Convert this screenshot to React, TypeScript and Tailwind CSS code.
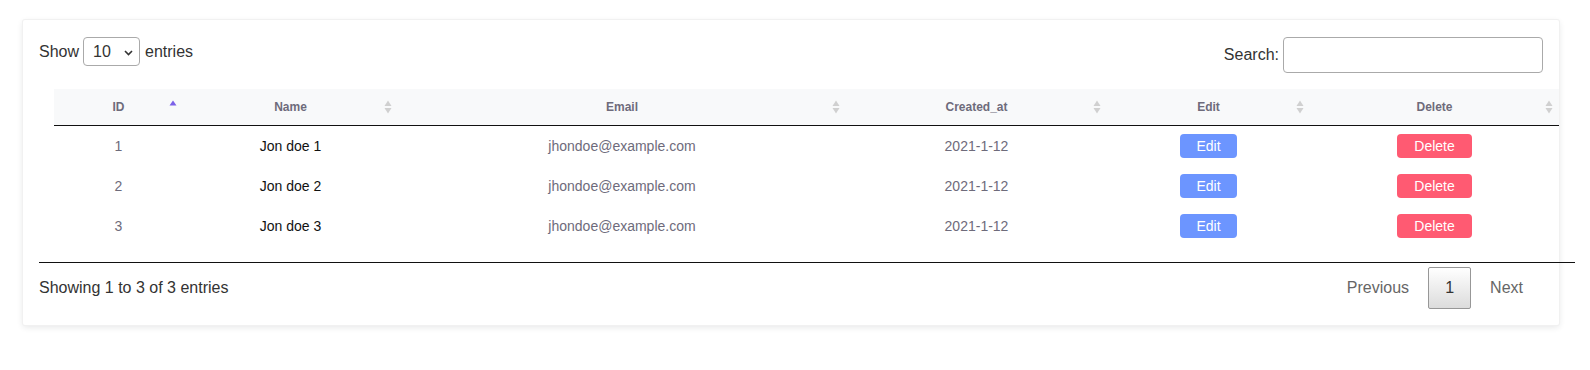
import React from "react";

const users = [
  { id: 1, name: "Jon doe 1", email: "jhondoe@example.com", created: "2021-1-12" },
  { id: 2, name: "Jon doe 2", email: "jhondoe@example.com", created: "2021-1-12" },
  { id: 3, name: "Jon doe 3", email: "jhondoe@example.com", created: "2021-1-12" },
];

const cols = "grid grid-cols-[129px_215px_448px_261px_203px_249px]";

const SortIcon = ({ active }: { active?: boolean }) => (
  <svg width="8" height="15" viewBox="0 0 8 15" className="absolute right-[6px] top-1/2 -translate-y-1/2">
    {active ? (
      <path d="M0.5 6 L4 1 L7.5 6 Z" fill="#7b61e8" />
    ) : (
      <>
        <path d="M0.5 6.5 L4 1 L7.5 6.5 Z" fill="#d0d0d0" />
        <path d="M0.5 8.5 L4 14 L7.5 8.5 Z" fill="#d0d0d0" />
      </>
    )}
  </svg>
);

const HeadCell = ({ label, active }: { label: string; active?: boolean }) => (
  <div className="relative flex items-center justify-center">
    <span>{label}</span>
    <SortIcon active={active} />
  </div>
);

export default function App() {
  return (
    <div className="min-h-[370px] bg-white pl-[23px] pt-[20px] font-['Liberation_Sans',Arial,sans-serif]">
      <div className="w-[1536px] rounded-[2px] bg-white px-[16px] pt-[17px] pb-[16px] shadow-[0_2px_6px_0_rgba(34,41,47,0.12)] ring-1 ring-[#f1f1f1]">
        {/* Top controls */}
        <div className="flex items-start justify-between text-[16px] text-[#333]">
          <div className="flex h-[29px] items-center">
            <span>Show</span>
            <div className="relative ml-[4px] mr-[5px] flex h-[29px] w-[57px] items-center rounded-[4px] border border-[#aaa] pl-[9px]">
              <span>10</span>
              <svg width="9" height="6" viewBox="0 0 9 6" className="absolute right-[6px] top-[12px]">
                <path d="M1 1 L4.5 4.5 L8 1" fill="none" stroke="#333" strokeWidth="1.6" />
              </svg>
            </div>
            <span>entries</span>
          </div>
          <div className="flex h-[36px] items-center">
            <span className="mr-[4px]">Search:</span>
            <input className="h-[36px] w-[260px] rounded-[4px] border border-[#aaa] bg-white px-[6px] outline-none" />
          </div>
        </div>

        {/* Table */}
        <div className="ml-[15px] mt-[16px] w-[1505px]">
          <div className={`${cols} h-[37px] border-b border-[#111] bg-[#f8f9fa] text-[12px] font-bold text-[#6e6b7b]`}>
            <HeadCell label="ID" active />
            <HeadCell label="Name" />
            <HeadCell label="Email" />
            <HeadCell label="Created_at" />
            <HeadCell label="Edit" />
            <HeadCell label="Delete" />
          </div>
          {users.map((u) => (
            <div key={u.id} className={`${cols} h-[40px] text-[14px] text-[#6e6b7b]`}>
              <div className="flex items-center justify-center">{u.id}</div>
              <div className="flex items-center justify-center text-[#111]">{u.name}</div>
              <div className="flex items-center justify-center">{u.email}</div>
              <div className="flex items-center justify-center">{u.created}</div>
              <div className="flex items-center justify-center">
                <button className="h-[24px] w-[57px] rounded-[4px] bg-[#6c95ff] text-[14px] text-white">Edit</button>
              </div>
              <div className="flex items-center justify-center">
                <button className="h-[24px] w-[75px] rounded-[4px] bg-[#ff5a72] text-[14px] text-white">Delete</button>
              </div>
            </div>
          ))}
        </div>

        {/* Footer */}
        <div className="mt-[16px] h-px w-[1536px] bg-[#111]" />
        <div className="flex items-center justify-between pt-[4px] text-[16px] text-[#333]">
          <span>Showing 1 to 3 of 3 entries</span>
          <div className="mr-[4px] flex items-center gap-[3px]">
            <span className="px-[16px] text-[#666]">Previous</span>
            <span className="flex h-[42px] w-[43px] items-center justify-center rounded-[2px] border border-[#979797] bg-gradient-to-b from-white to-[#dcdcdc] text-[#333]">
              1
            </span>
            <span className="px-[16px] text-[#666]">Next</span>
          </div>
        </div>
      </div>
    </div>
  );
}
